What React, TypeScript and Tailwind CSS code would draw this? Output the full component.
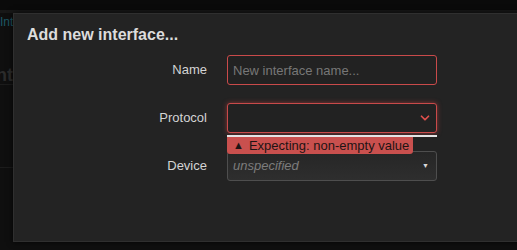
import { ChevronDown } from "lucide-react";

const font = { fontFamily: '"Liberation Sans", Arial, sans-serif' };

function Row({ label, children }: { label: string; children: React.ReactNode }) {
  return (
    <div className="flex h-[30px] items-center">
      <div className="w-[193px] text-right text-[13px] text-[#d4d4d4]">{label}</div>
      <div className="relative ml-[20px] w-[210px]">{children}</div>
    </div>
  );
}

export default function App() {
  return (
    <div className="relative h-[250px] w-[517px] overflow-hidden bg-[#0f0f0f]" style={font}>
      {/* page behind the dialog */}
      <div className="h-[10px] bg-[#0a0a0a]" />
      <div className="h-[3px] bg-[#181818]" />
      <div className="absolute left-0 top-[13px] text-[12px] text-[#1d5866]">Int</div>
      <div className="absolute left-[-4px] top-[62px] text-[18px] font-bold text-[#2c2c2c]">nt</div>
      <div className="absolute left-0 top-[84px] h-px w-[13px] bg-[#1c1c1c]" />
      <div className="absolute left-0 top-[167px] h-px w-[13px] bg-[#1c1c1c]" />

      {/* dialog */}
      <div className="absolute left-[13px] top-[13px] h-[229px] w-[520px] border border-[#2f2f2f] bg-[#232323] shadow-[0_0_6px_rgba(0,0,0,0.8)]">
        <h3 className="pl-[13px] pt-[11px] text-[16px] font-bold leading-[20px] text-[#dcdcdc]">Add new interface...</h3>

        <div className="mt-[10px] flex flex-col gap-[18px]">
          <Row label="Name">
            <input
              className="h-[30px] w-full rounded-[3px] border border-[#c94a4a] bg-[#222] px-[5px] text-[13px] text-[#ddd] outline-none placeholder:text-[#777]"
              placeholder="New interface name..."
              style={font}
            />
          </Row>

          <Row label="Protocol">
            <div className="flex h-[30px] w-full items-center justify-end rounded-[3px] border border-[#c94a4a] bg-[#222] pr-[4px] shadow-[0_0_5px_rgba(220,70,70,0.55)]">
              <ChevronDown className="h-[14px] w-[14px] text-[#e0504d]" strokeWidth={3} />
            </div>
            <div className="absolute left-0 top-[32px] z-10 w-[210px]">
              <div className="h-[2px] w-full bg-[#e4e4e4]" />
              <div className="flex h-[17px] w-[186px] items-center gap-[5px] rounded-b-[3px] bg-[#c9504e] pl-[6px] text-[13px] leading-none text-[#1e1414]">
                <span className="text-[11px]">▲</span>
                <span>Expecting: non-empty value</span>
              </div>
            </div>
          </Row>

          <Row label="Device">
            <div className="flex h-[30px] w-full items-center justify-between rounded-[3px] border border-[#4e4e4e] bg-gradient-to-b from-[#262626] to-[#2e2e2e] pl-[5px] pr-[7px]">
              <span className="text-[13px] italic text-[#7c7c7c]">unspecified</span>
              <span className="text-[7px] text-[#d8d8d8]">▼</span>
            </div>
          </Row>
        </div>
      </div>
    </div>
  );
}
